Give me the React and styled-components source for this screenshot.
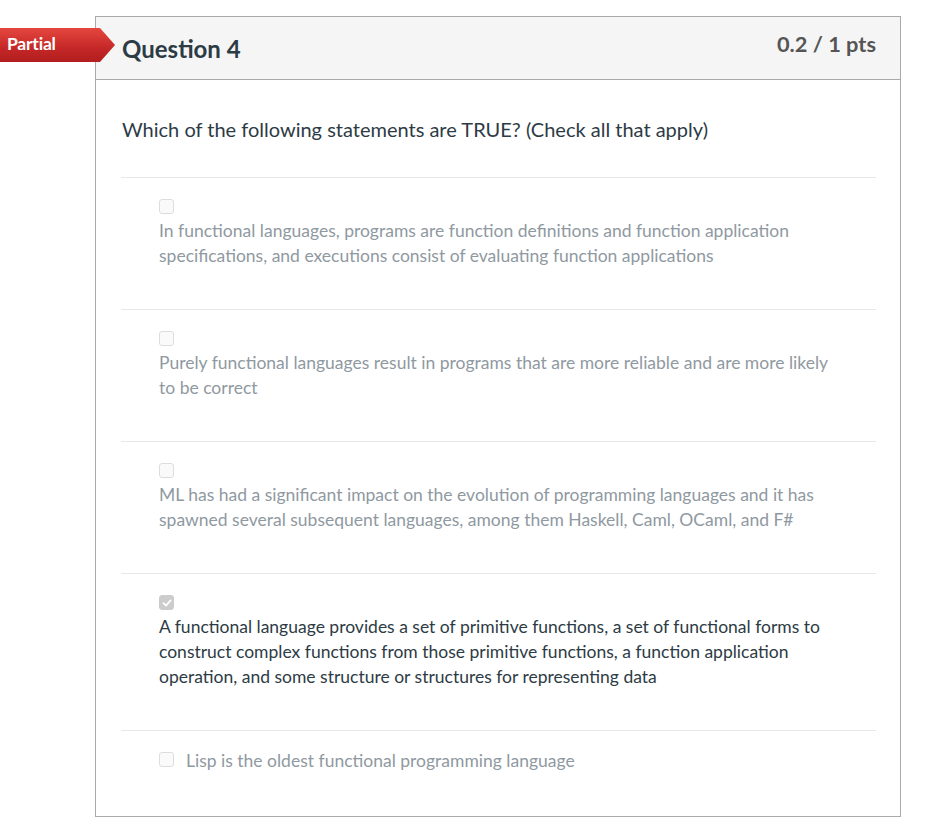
import React from "react";
import styled, { createGlobalStyle } from "styled-components";

const GlobalStyle = createGlobalStyle`
  body {
    margin: 0;
    background: #ffffff;
    font-family: Lato, "Open Sans", sans-serif;
  }
`;

const answers = [
  {
    text: "In functional languages, programs are function definitions and function application specifications, and executions consist of evaluating function applications",
    checked: false,
  },
  {
    text: "Purely functional languages result in programs that are more reliable and are more likely to be correct",
    checked: false,
  },
  {
    text: "ML has had a significant impact on the evolution of programming languages and it has spawned several subsequent languages, among them Haskell, Caml, OCaml, and F#",
    checked: false,
  },
  {
    text: "A functional language provides a set of primitive functions, a set of functional forms to construct complex functions from those primitive functions, a function application operation, and some structure or structures for representing data",
    checked: true,
  },
  {
    text: "Lisp is the oldest functional programming language",
    checked: false,
  },
];

const App = () => {
  return (
    <Page>
      <GlobalStyle />
      <Badge>Partial</Badge>
      <Card>
        <Header>
          <Title>Question 4</Title>
          <Points>0.2 / 1 pts</Points>
        </Header>
        <Body>
          <Prompt>Which of the following statements are TRUE? (Check all that apply)</Prompt>
          {answers.map((a, i) => (
            <AnswerRow key={i}>
              <CheckBox checked={a.checked}>
                {a.checked && (
                  <svg width="10" height="10" viewBox="0 0 10 10">
                    <path
                      d="M1.5 5.2 L4 7.6 L8.6 2.4"
                      fill="none"
                      stroke="#ffffff"
                      strokeWidth="1.8"
                      strokeLinecap="round"
                      strokeLinejoin="round"
                    />
                  </svg>
                )}
              </CheckBox>
              <AnswerText selected={a.checked}>{a.text}</AnswerText>
            </AnswerRow>
          ))}
        </Body>
      </Card>
    </Page>
  );
};

const Page = styled.div`
  position: relative;
  padding: 16px 0 0 95px;
  width: 806px;
`;

const Badge = styled.div`
  position: absolute;
  left: 0;
  top: 28px;
  width: 115px;
  height: 34px;
  box-sizing: border-box;
  padding: 0 0 3px 7px;
  display: flex;
  align-items: center;
  color: #ffffff;
  font-weight: bold;
  font-size: 17.5px;
  letter-spacing: -0.2px;
  background: linear-gradient(#e5473f, #c42727 60%, #b21e1e);
  clip-path: polygon(0 0, 100px 0, 115px 50%, 100px 100%, 0 100%);
`;

const Card = styled.div`
  border: 1px solid #aaaaaa;
  background: #ffffff;
`;

const Header = styled.div`
  display: flex;
  justify-content: space-between;
  align-items: flex-start;
  height: 63px;
  box-sizing: border-box;
  padding: 0 24px 0 26px;
  background: #f5f5f5;
  border-bottom: 1px solid #aaaaaa;
`;

const Title = styled.h2`
  margin: 16px 0 0;
  font-size: 24px;
  line-height: 32px;
  font-weight: bold;
  color: #2d3b45;
`;

const Points = styled.div`
  margin-top: 12px;
  font-size: 21.8px;
  line-height: 30px;
  font-weight: bold;
  color: #555555;
`;

const Body = styled.div`
  padding: 0 24px 2px 25px;
`;

const Prompt = styled.p`
  margin: 0;
  padding: 35px 0 33px 1px;
  font-size: 20px;
  line-height: 29px;
  font-weight: 400;
  color: #2d3b45;
`;

const AnswerRow = styled.div`
  display: flex;
  flex-wrap: wrap;
  column-gap: 12px;
  border-top: 1px solid #e8e8e8;
  padding: 17px 36px 41px 38px;
`;

const CheckBox = styled.span`
  flex: none;
  align-self: flex-start;
  box-sizing: border-box;
  width: 15px;
  height: 15px;
  margin: 4px 0 4px;
  border-radius: 3px;
  display: flex;
  align-items: center;
  justify-content: center;
  border: 1px solid ${(p) => (p.checked ? "#cccccc" : "#dddddd")};
  background: ${(p) => (p.checked ? "#cccccc" : "#fafafa")};
`;

const AnswerText = styled.span`
  font-size: 17.5px;
  line-height: 25px;
  font-weight: 400;
  color: ${(p) => (p.selected ? "#2d3b45" : "#8f99a1")};
`;

export default App;
